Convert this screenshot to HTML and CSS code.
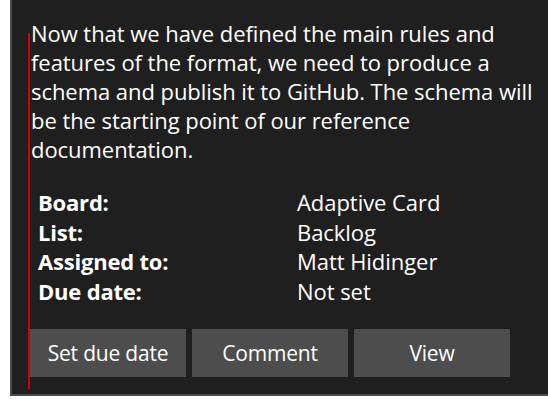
FILE: index.html
```html
<!DOCTYPE html>
<html>
<head>
<meta charset="utf-8">
<link rel="stylesheet" href="styles.css">
</head>
<body>
<div class="frame">
  <div class="card">
    <p class="desc">Now that we have defined the main rules and features of the format, we need to produce a schema and publish it to GitHub. The schema will be the starting point of our reference documentation.</p>
    <div class="facts">
      <div class="label">Board:</div><div class="value">Adaptive Card</div>
      <div class="label">List:</div><div class="value">Backlog</div>
      <div class="label">Assigned to:</div><div class="value">Matt Hidinger</div>
      <div class="label">Due date:</div><div class="value">Not set</div>
    </div>
    <div class="actions">
      <button class="btn">Set due date</button>
      <button class="btn">Comment</button>
      <button class="btn">View</button>
    </div>
  </div>
</div>
</body>
</html>
```

FILE: styles.css
```css
html, body {
  margin: 0;
  padding: 0;
  background: #ffffff;
}
body {
  width: 548px;
  height: 403px;
  overflow: hidden;
  font-family: "Open Sans", "Noto Sans", sans-serif;
  color: #ffffff;
}
.frame {
  margin-left: 10px;
  height: 396px;
  box-sizing: border-box;
  background: #1f1f1f;
  border-left: 2px solid #4a4a4a;
  border-bottom: 2px solid #4a4a4a;
  padding: 19px 0 0 16px;
  position: relative;
}
.card {
  position: relative;
  padding-left: 3px;
}
.card::before {
  content: "";
  position: absolute;
  left: 0;
  top: 14px;
  width: 2px;
  height: 356px;
  background: #d40000;
}
.desc {
  margin: 0;
  font-size: 22px;
  font-weight: 500;
  line-height: 29px;
  letter-spacing: -0.05px;
  width: 515px;
}
.facts {
  display: grid;
  grid-template-columns: 259px auto;
  margin: 24px 0 0 7px;
  font-size: 22px;
  font-weight: 500;
  line-height: 29.5px;
  letter-spacing: -0.05px;
}
.label {
  font-weight: bold;
  letter-spacing: -0.2px;
}
.actions {
  display: flex;
  gap: 6px;
  margin-top: 23px;
  margin-left: -1px;
}
.btn {
  width: 156px;
  height: 48px;
  border: none;
  background: #4d4d4d;
  color: #ffffff;
  font-family: "Open Sans", "Noto Sans", sans-serif;
  font-size: 21px;
  font-weight: 500;
  letter-spacing: -0.2px;
  padding: 0;
}
```
